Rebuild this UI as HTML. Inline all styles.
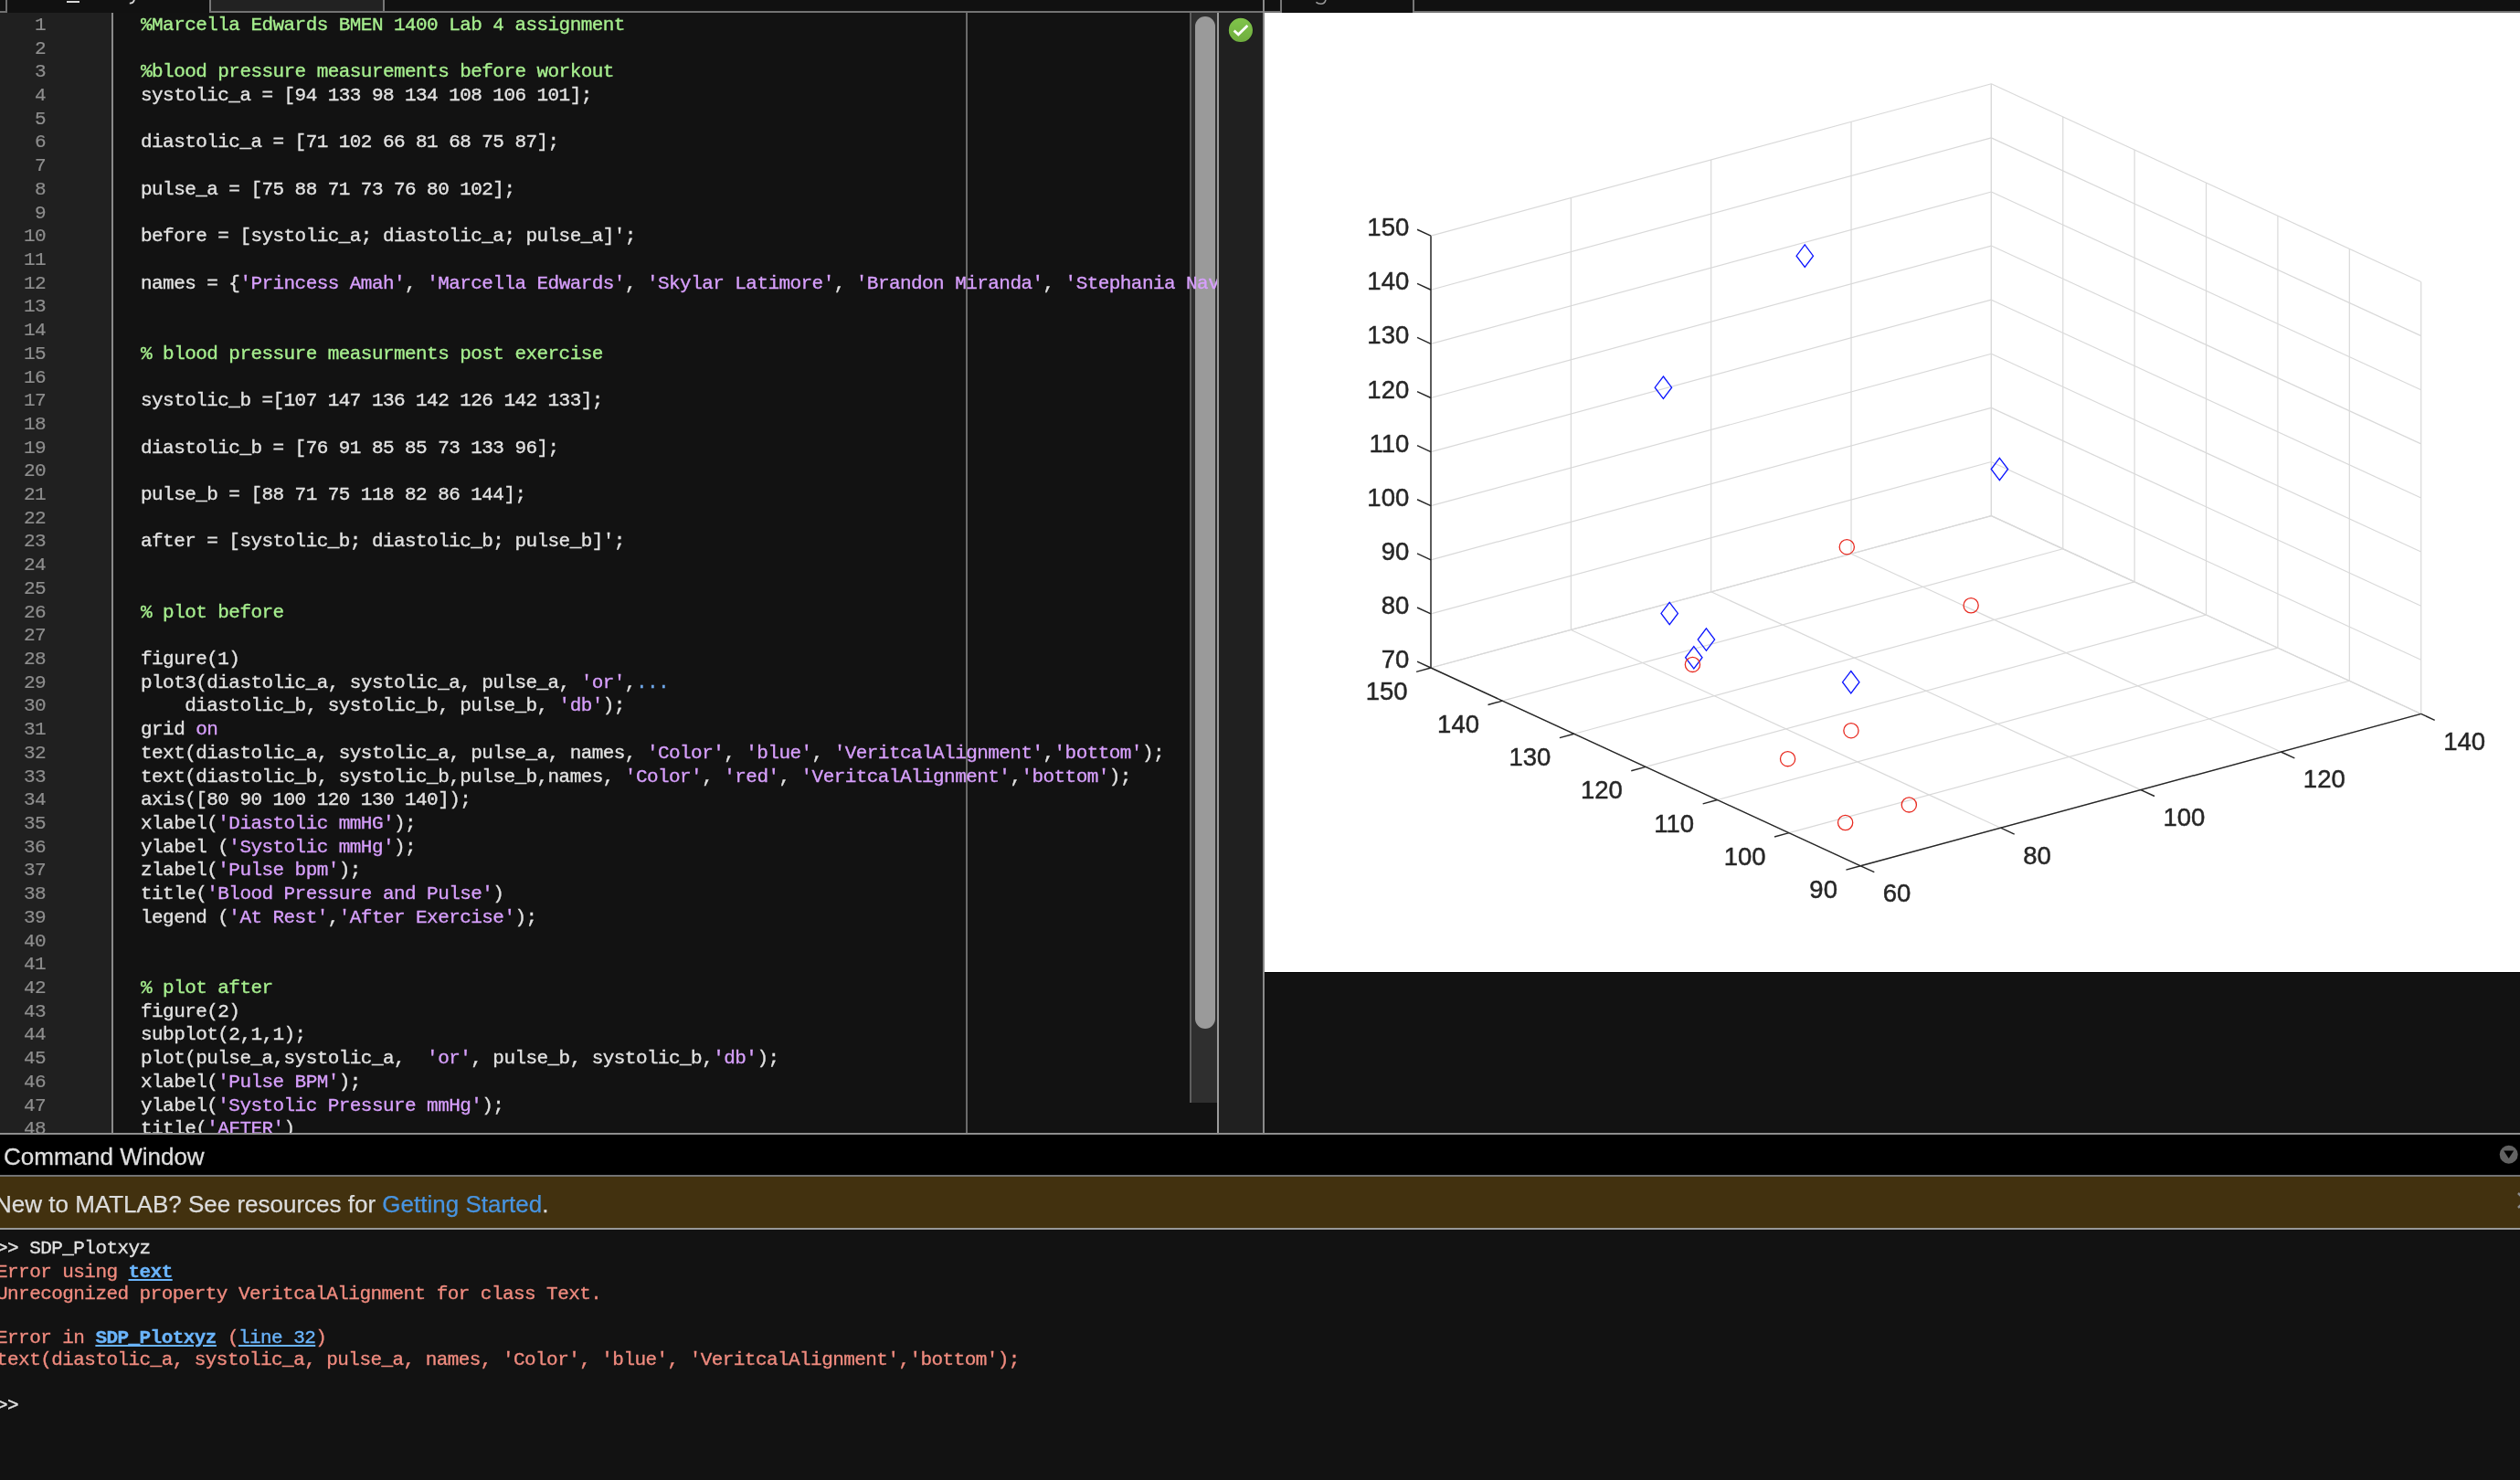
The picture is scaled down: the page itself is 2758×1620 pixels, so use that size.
<!DOCTYPE html>
<html><head><meta charset="utf-8">
<style>
html,body{margin:0;padding:0}
body{width:2758px;height:1620px;overflow:hidden;position:relative;background:#121212;font-family:"Liberation Sans",sans-serif}
.abs{position:absolute}
#topbar{left:0;top:0;width:2758px;height:14px;background:#111}
#topline{left:0;top:12px;width:2758px;height:2px;background:#6e6e6e}
.tab{position:absolute;top:0;height:12px;overflow:hidden}
#gutter{left:0;top:14px;width:122px;height:1227px;background:#202020}
#gutline{left:122px;top:14px;width:2px;height:1227px;background:#8a8a8a}
#codebg{left:124px;top:14px;width:1208px;height:1227px;background:#121212}
#code{left:124px;top:14px;width:1208px;height:1226px;overflow:hidden;will-change:transform}
#margin{left:1057px;top:14px;width:2px;height:1227px;background:#6a6a6a}
#track{left:1302px;top:14px;width:31px;height:1193px;background:#2f2f2f}
#trackl{left:1302px;top:14px;width:2px;height:1193px;background:#5e5e5e}
#thumb{left:1307.8px;top:17.9px;width:22.2px;height:1108.3px;background:#9a9a9a;border-radius:11px}
#vl2{left:1332px;top:14px;width:2px;height:1227px;background:#9c9c9c}
#rpanel{left:1334px;top:14px;width:48px;height:1227px;background:#202020}
#vl3{left:1382px;top:0;width:2px;height:1241px;background:#8a8a8a}
#fig{left:1384px;top:14px;width:1374px;height:1050px;background:#fff}
#figline{left:1384px;top:1063.5px;width:1374px;height:1.2px;background:#000}
#edbot{left:0;top:1240px;width:2758px;height:2px;background:#8e8e8e}
#cwhead{left:0;top:1242px;width:2758px;height:44px;background:#000}
#cwline{left:0;top:1286px;width:2758px;height:2px;background:#737373}
#banner{left:0;top:1288px;width:2758px;height:56px;background:#42310f}
#banline{left:0;top:1344px;width:2758px;height:2px;background:#989898}
.ln{position:absolute;will-change:transform;-webkit-text-stroke:0.2px currentColor;left:0;width:50px;text-align:right;font-family:"Liberation Mono",monospace;font-size:21px;letter-spacing:-0.56px;line-height:25.71px;color:#8e8e8e;white-space:pre}
.cl{position:absolute;left:30px;-webkit-text-stroke:0.35px currentColor;font-family:"Liberation Mono",monospace;font-size:21px;letter-spacing:-0.56px;line-height:25.71px;white-space:pre;color:#e2e2e2}
.d{color:#e2e2e2}.c{color:#a6ee8e}.s{color:#d79ffc}.k{color:#6fa8ea}
.mono{position:absolute;-webkit-text-stroke:0.35px currentColor;will-change:transform;font-family:"Liberation Mono",monospace;font-size:21px;letter-spacing:-0.56px;line-height:24px;white-space:pre}
.err{color:#f08b7f}
.lnk{color:#6ab4fb;font-weight:bold;text-decoration:underline}
.lnk2{color:#6ab4fb;text-decoration:underline}
</style></head><body>
<div id="topbar" class="abs"></div>
<div class="abs" style="left:0;top:12px;width:7.6px;height:1.8px;background:#707070"></div>
<div class="abs" style="left:5.7px;top:0;width:1.9px;height:13.6px;background:#707070;border-bottom-right-radius:1px"></div>
<div class="abs" style="left:228.7px;top:0;width:192.2px;height:12px;background:#222"></div>
<div class="abs" style="left:228.7px;top:0;width:1.9px;height:13.8px;background:#777"></div>
<div class="abs" style="left:419px;top:0;width:1.9px;height:13.8px;background:#777"></div>
<div class="abs" style="left:228.7px;top:12px;width:1153.3px;height:1.8px;background:#737373"></div>
<div class="abs" style="left:1384px;top:12px;width:19px;height:1.8px;background:#737373"></div>
<div class="abs" style="left:1401px;top:0;width:1.9px;height:13.8px;background:#777"></div>
<div class="abs" style="left:1546px;top:0;width:1.9px;height:13.8px;background:#777"></div>
<div class="abs" style="left:1546px;top:12px;width:1212px;height:1.8px;background:#737373"></div>
<div class="abs" style="left:73.3px;top:1.1px;width:13.4px;height:1.8px;background:#d8d8d8"></div>
<svg class="abs" style="left:138px;top:0" width="12" height="7" viewBox="0 0 12 7"><path d="M9 -1Q8.5 3.6 3.8 3.6" fill="none" stroke="#d8d8d8" stroke-width="1.8"/></svg>
<svg class="abs" style="left:1438px;top:0" width="16" height="7" viewBox="0 0 16 7"><path d="M13 -1Q12.5 4.2 7.6 4.2Q4.4 4.2 2.4 2.4" fill="none" stroke="#9a9a9a" stroke-width="1.6"/></svg>
<div id="gutter" class="abs"><div class="ln" style="top:0.86px">1</div>
<div class="ln" style="top:26.57px">2</div>
<div class="ln" style="top:52.28px">3</div>
<div class="ln" style="top:77.99px">4</div>
<div class="ln" style="top:103.70px">5</div>
<div class="ln" style="top:129.41px">6</div>
<div class="ln" style="top:155.12px">7</div>
<div class="ln" style="top:180.83px">8</div>
<div class="ln" style="top:206.54px">9</div>
<div class="ln" style="top:232.25px">10</div>
<div class="ln" style="top:257.96px">11</div>
<div class="ln" style="top:283.67px">12</div>
<div class="ln" style="top:309.38px">13</div>
<div class="ln" style="top:335.09px">14</div>
<div class="ln" style="top:360.80px">15</div>
<div class="ln" style="top:386.51px">16</div>
<div class="ln" style="top:412.22px">17</div>
<div class="ln" style="top:437.93px">18</div>
<div class="ln" style="top:463.64px">19</div>
<div class="ln" style="top:489.35px">20</div>
<div class="ln" style="top:515.06px">21</div>
<div class="ln" style="top:540.77px">22</div>
<div class="ln" style="top:566.48px">23</div>
<div class="ln" style="top:592.19px">24</div>
<div class="ln" style="top:617.90px">25</div>
<div class="ln" style="top:643.61px">26</div>
<div class="ln" style="top:669.32px">27</div>
<div class="ln" style="top:695.03px">28</div>
<div class="ln" style="top:720.74px">29</div>
<div class="ln" style="top:746.45px">30</div>
<div class="ln" style="top:772.16px">31</div>
<div class="ln" style="top:797.87px">32</div>
<div class="ln" style="top:823.58px">33</div>
<div class="ln" style="top:849.29px">34</div>
<div class="ln" style="top:875.00px">35</div>
<div class="ln" style="top:900.71px">36</div>
<div class="ln" style="top:926.42px">37</div>
<div class="ln" style="top:952.13px">38</div>
<div class="ln" style="top:977.84px">39</div>
<div class="ln" style="top:1003.55px">40</div>
<div class="ln" style="top:1029.26px">41</div>
<div class="ln" style="top:1054.97px">42</div>
<div class="ln" style="top:1080.68px">43</div>
<div class="ln" style="top:1106.39px">44</div>
<div class="ln" style="top:1132.10px">45</div>
<div class="ln" style="top:1157.81px">46</div>
<div class="ln" style="top:1183.52px">47</div>
<div class="ln" style="top:1209.23px">48</div></div>
<div id="gutline" class="abs"></div>
<div id="codebg" class="abs"></div>
<div id="margin" class="abs"></div>
<div id="track" class="abs"></div>
<div id="trackl" class="abs"></div>
<div id="thumb" class="abs"></div>
<div id="code" class="abs"><div class="cl" style="top:0.86px"><span class="c">%Marcella Edwards BMEN 1400 Lab 4 assignment</span></div>
<div class="cl" style="top:52.28px"><span class="c">%blood pressure measurements before workout</span></div>
<div class="cl" style="top:77.99px"><span class="d">systolic_a = [94 133 98 134 108 106 101];</span></div>
<div class="cl" style="top:129.41px"><span class="d">diastolic_a = [71 102 66 81 68 75 87];</span></div>
<div class="cl" style="top:180.83px"><span class="d">pulse_a = [75 88 71 73 76 80 102];</span></div>
<div class="cl" style="top:232.25px"><span class="d">before = [systolic_a; diastolic_a; pulse_a]&#x27;;</span></div>
<div class="cl" style="top:283.67px"><span class="d">names = {</span><span class="s">&#x27;Princess Amah&#x27;</span><span class="d">, </span><span class="s">&#x27;Marcella Edwards&#x27;</span><span class="d">, </span><span class="s">&#x27;Skylar Latimore&#x27;</span><span class="d">, </span><span class="s">&#x27;Brandon Miranda&#x27;</span><span class="d">, </span><span class="s">&#x27;Stephania Navarro&#x27;</span><span class="d">};</span></div>
<div class="cl" style="top:360.80px"><span class="c">% blood pressure measurments post exercise</span></div>
<div class="cl" style="top:412.22px"><span class="d">systolic_b =[107 147 136 142 126 142 133];</span></div>
<div class="cl" style="top:463.64px"><span class="d">diastolic_b = [76 91 85 85 73 133 96];</span></div>
<div class="cl" style="top:515.06px"><span class="d">pulse_b = [88 71 75 118 82 86 144];</span></div>
<div class="cl" style="top:566.48px"><span class="d">after = [systolic_b; diastolic_b; pulse_b]&#x27;;</span></div>
<div class="cl" style="top:643.61px"><span class="c">% plot before</span></div>
<div class="cl" style="top:695.03px"><span class="d">figure(1)</span></div>
<div class="cl" style="top:720.74px"><span class="d">plot3(diastolic_a, systolic_a, pulse_a, </span><span class="s">&#x27;or&#x27;</span><span class="d">,</span><span class="k">...</span></div>
<div class="cl" style="top:746.45px"><span class="d">    diastolic_b, systolic_b, pulse_b, </span><span class="s">&#x27;db&#x27;</span><span class="d">);</span></div>
<div class="cl" style="top:772.16px"><span class="d">grid </span><span class="s">on</span></div>
<div class="cl" style="top:797.87px"><span class="d">text(diastolic_a, systolic_a, pulse_a, names, </span><span class="s">&#x27;Color&#x27;</span><span class="d">, </span><span class="s">&#x27;blue&#x27;</span><span class="d">, </span><span class="s">&#x27;VeritcalAlignment&#x27;</span><span class="d">,</span><span class="s">&#x27;bottom&#x27;</span><span class="d">);</span></div>
<div class="cl" style="top:823.58px"><span class="d">text(diastolic_b, systolic_b,pulse_b,names, </span><span class="s">&#x27;Color&#x27;</span><span class="d">, </span><span class="s">&#x27;red&#x27;</span><span class="d">, </span><span class="s">&#x27;VeritcalAlignment&#x27;</span><span class="d">,</span><span class="s">&#x27;bottom&#x27;</span><span class="d">);</span></div>
<div class="cl" style="top:849.29px"><span class="d">axis([80 90 100 120 130 140]);</span></div>
<div class="cl" style="top:875.00px"><span class="d">xlabel(</span><span class="s">&#x27;Diastolic mmHG&#x27;</span><span class="d">);</span></div>
<div class="cl" style="top:900.71px"><span class="d">ylabel (</span><span class="s">&#x27;Systolic mmHg&#x27;</span><span class="d">);</span></div>
<div class="cl" style="top:926.42px"><span class="d">zlabel(</span><span class="s">&#x27;Pulse bpm&#x27;</span><span class="d">);</span></div>
<div class="cl" style="top:952.13px"><span class="d">title(</span><span class="s">&#x27;Blood Pressure and Pulse&#x27;</span><span class="d">)</span></div>
<div class="cl" style="top:977.84px"><span class="d">legend (</span><span class="s">&#x27;At Rest&#x27;</span><span class="d">,</span><span class="s">&#x27;After Exercise&#x27;</span><span class="d">);</span></div>
<div class="cl" style="top:1054.97px"><span class="c">% plot after</span></div>
<div class="cl" style="top:1080.68px"><span class="d">figure(2)</span></div>
<div class="cl" style="top:1106.39px"><span class="d">subplot(2,1,1);</span></div>
<div class="cl" style="top:1132.10px"><span class="d">plot(pulse_a,systolic_a,  </span><span class="s">&#x27;or&#x27;</span><span class="d">, pulse_b, systolic_b,</span><span class="s">&#x27;db&#x27;</span><span class="d">);</span></div>
<div class="cl" style="top:1157.81px"><span class="d">xlabel(</span><span class="s">&#x27;Pulse BPM&#x27;</span><span class="d">);</span></div>
<div class="cl" style="top:1183.52px"><span class="d">ylabel(</span><span class="s">&#x27;Systolic Pressure mmHg&#x27;</span><span class="d">);</span></div>
<div class="cl" style="top:1209.23px"><span class="d">title(</span><span class="s">&#x27;AFTER&#x27;</span><span class="d">)</span></div></div>
<div id="vl2" class="abs"></div>
<div id="rpanel" class="abs"></div>
<svg class="abs" style="left:1340px;top:16px" width="36" height="36" viewBox="1340 16 36 36">
<defs><linearGradient id="gg" x1="0" y1="0" x2="0" y2="1"><stop offset="0" stop-color="#80c44a"/><stop offset="1" stop-color="#70ad3f"/></linearGradient></defs>
<circle cx="1357.9" cy="32.9" r="13.6" fill="#15151c"/>
<circle cx="1357.9" cy="32.9" r="13.1" fill="url(#gg)"/>
<path d="M1350.6 33.4L1355.3 37.8L1365.3 28" fill="none" stroke="#fff" stroke-width="2.8"/>
</svg>
<div id="vl3" class="abs"></div>
<div id="fig" class="abs"></div>
<svg class="abs" style="left:1384px;top:14px;will-change:transform" width="1374" height="1050" viewBox="1384 14 1374 1050" font-family="Liberation Sans" font-size="27.5" fill="#262626"><g stroke="none">
<line x1="2036.35" y1="947.80" x2="1566.01" y2="731.02" stroke="#d9d9d9" stroke-width="1.2"/>
<line x1="2189.69" y1="906.20" x2="1719.35" y2="689.42" stroke="#d9d9d9" stroke-width="1.2"/>
<line x1="2343.03" y1="864.60" x2="1872.69" y2="647.82" stroke="#d9d9d9" stroke-width="1.2"/>
<line x1="2496.37" y1="823.00" x2="2026.03" y2="606.22" stroke="#d9d9d9" stroke-width="1.2"/>
<line x1="2649.71" y1="781.40" x2="2179.37" y2="564.62" stroke="#d9d9d9" stroke-width="1.2"/>
<line x1="2036.35" y1="947.80" x2="2649.71" y2="781.40" stroke="#d9d9d9" stroke-width="1.2"/>
<line x1="1957.96" y1="911.67" x2="2571.32" y2="745.27" stroke="#d9d9d9" stroke-width="1.2"/>
<line x1="1879.57" y1="875.54" x2="2492.93" y2="709.14" stroke="#d9d9d9" stroke-width="1.2"/>
<line x1="1801.18" y1="839.41" x2="2414.54" y2="673.01" stroke="#d9d9d9" stroke-width="1.2"/>
<line x1="1722.79" y1="803.28" x2="2336.15" y2="636.88" stroke="#d9d9d9" stroke-width="1.2"/>
<line x1="1644.40" y1="767.15" x2="2257.76" y2="600.75" stroke="#d9d9d9" stroke-width="1.2"/>
<line x1="1566.01" y1="731.02" x2="2179.37" y2="564.62" stroke="#d9d9d9" stroke-width="1.2"/>
<line x1="1566.01" y1="731.02" x2="1566.01" y2="258.14" stroke="#d9d9d9" stroke-width="1.2"/>
<line x1="1719.35" y1="689.42" x2="1719.35" y2="216.54" stroke="#d9d9d9" stroke-width="1.2"/>
<line x1="1872.69" y1="647.82" x2="1872.69" y2="174.94" stroke="#d9d9d9" stroke-width="1.2"/>
<line x1="2026.03" y1="606.22" x2="2026.03" y2="133.34" stroke="#d9d9d9" stroke-width="1.2"/>
<line x1="2179.37" y1="564.62" x2="2179.37" y2="91.74" stroke="#d9d9d9" stroke-width="1.2"/>
<line x1="1566.01" y1="731.02" x2="2179.37" y2="564.62" stroke="#d9d9d9" stroke-width="1.2"/>
<line x1="1566.01" y1="671.91" x2="2179.37" y2="505.51" stroke="#d9d9d9" stroke-width="1.2"/>
<line x1="1566.01" y1="612.80" x2="2179.37" y2="446.40" stroke="#d9d9d9" stroke-width="1.2"/>
<line x1="1566.01" y1="553.69" x2="2179.37" y2="387.29" stroke="#d9d9d9" stroke-width="1.2"/>
<line x1="1566.01" y1="494.58" x2="2179.37" y2="328.18" stroke="#d9d9d9" stroke-width="1.2"/>
<line x1="1566.01" y1="435.47" x2="2179.37" y2="269.07" stroke="#d9d9d9" stroke-width="1.2"/>
<line x1="1566.01" y1="376.36" x2="2179.37" y2="209.96" stroke="#d9d9d9" stroke-width="1.2"/>
<line x1="1566.01" y1="317.25" x2="2179.37" y2="150.85" stroke="#d9d9d9" stroke-width="1.2"/>
<line x1="1566.01" y1="258.14" x2="2179.37" y2="91.74" stroke="#d9d9d9" stroke-width="1.2"/>
<line x1="2649.71" y1="781.40" x2="2649.71" y2="308.52" stroke="#d9d9d9" stroke-width="1.2"/>
<line x1="2571.32" y1="745.27" x2="2571.32" y2="272.39" stroke="#d9d9d9" stroke-width="1.2"/>
<line x1="2492.93" y1="709.14" x2="2492.93" y2="236.26" stroke="#d9d9d9" stroke-width="1.2"/>
<line x1="2414.54" y1="673.01" x2="2414.54" y2="200.13" stroke="#d9d9d9" stroke-width="1.2"/>
<line x1="2336.15" y1="636.88" x2="2336.15" y2="164.00" stroke="#d9d9d9" stroke-width="1.2"/>
<line x1="2257.76" y1="600.75" x2="2257.76" y2="127.87" stroke="#d9d9d9" stroke-width="1.2"/>
<line x1="2179.37" y1="564.62" x2="2179.37" y2="91.74" stroke="#d9d9d9" stroke-width="1.2"/>
<line x1="2649.71" y1="781.40" x2="2179.37" y2="564.62" stroke="#d9d9d9" stroke-width="1.2"/>
<line x1="2649.71" y1="722.29" x2="2179.37" y2="505.51" stroke="#d9d9d9" stroke-width="1.2"/>
<line x1="2649.71" y1="663.18" x2="2179.37" y2="446.40" stroke="#d9d9d9" stroke-width="1.2"/>
<line x1="2649.71" y1="604.07" x2="2179.37" y2="387.29" stroke="#d9d9d9" stroke-width="1.2"/>
<line x1="2649.71" y1="544.96" x2="2179.37" y2="328.18" stroke="#d9d9d9" stroke-width="1.2"/>
<line x1="2649.71" y1="485.85" x2="2179.37" y2="269.07" stroke="#d9d9d9" stroke-width="1.2"/>
<line x1="2649.71" y1="426.74" x2="2179.37" y2="209.96" stroke="#d9d9d9" stroke-width="1.2"/>
<line x1="2649.71" y1="367.63" x2="2179.37" y2="150.85" stroke="#d9d9d9" stroke-width="1.2"/>
<line x1="2649.71" y1="308.52" x2="2179.37" y2="91.74" stroke="#d9d9d9" stroke-width="1.2"/>
<line x1="2036.35" y1="947.80" x2="2649.71" y2="781.40" stroke="#262626" stroke-width="1.45"/>
<line x1="2036.35" y1="947.80" x2="1566.01" y2="731.02" stroke="#262626" stroke-width="1.45"/>
<line x1="1566.01" y1="731.02" x2="1566.01" y2="258.14" stroke="#262626" stroke-width="1.45"/>
<line x1="2036.35" y1="947.80" x2="2051.33" y2="954.71" stroke="#262626" stroke-width="1.45"/>
<line x1="2189.69" y1="906.20" x2="2204.67" y2="913.11" stroke="#262626" stroke-width="1.45"/>
<line x1="2343.03" y1="864.60" x2="2358.01" y2="871.51" stroke="#262626" stroke-width="1.45"/>
<line x1="2496.37" y1="823.00" x2="2511.35" y2="829.91" stroke="#262626" stroke-width="1.45"/>
<line x1="2649.71" y1="781.40" x2="2664.69" y2="788.31" stroke="#262626" stroke-width="1.45"/>
<line x1="2036.35" y1="947.80" x2="2020.43" y2="952.12" stroke="#262626" stroke-width="1.45"/>
<line x1="1957.96" y1="911.67" x2="1942.04" y2="915.99" stroke="#262626" stroke-width="1.45"/>
<line x1="1879.57" y1="875.54" x2="1863.65" y2="879.86" stroke="#262626" stroke-width="1.45"/>
<line x1="1801.18" y1="839.41" x2="1785.26" y2="843.73" stroke="#262626" stroke-width="1.45"/>
<line x1="1722.79" y1="803.28" x2="1706.87" y2="807.60" stroke="#262626" stroke-width="1.45"/>
<line x1="1644.40" y1="767.15" x2="1628.48" y2="771.47" stroke="#262626" stroke-width="1.45"/>
<line x1="1566.01" y1="731.02" x2="1550.09" y2="735.34" stroke="#262626" stroke-width="1.45"/>
<line x1="1566.01" y1="731.02" x2="1551.03" y2="724.11" stroke="#262626" stroke-width="1.45"/>
<line x1="1566.01" y1="671.91" x2="1551.03" y2="665.00" stroke="#262626" stroke-width="1.45"/>
<line x1="1566.01" y1="612.80" x2="1551.03" y2="605.89" stroke="#262626" stroke-width="1.45"/>
<line x1="1566.01" y1="553.69" x2="1551.03" y2="546.78" stroke="#262626" stroke-width="1.45"/>
<line x1="1566.01" y1="494.58" x2="1551.03" y2="487.67" stroke="#262626" stroke-width="1.45"/>
<line x1="1566.01" y1="435.47" x2="1551.03" y2="428.56" stroke="#262626" stroke-width="1.45"/>
<line x1="1566.01" y1="376.36" x2="1551.03" y2="369.45" stroke="#262626" stroke-width="1.45"/>
<line x1="1566.01" y1="317.25" x2="1551.03" y2="310.34" stroke="#262626" stroke-width="1.45"/>
<line x1="1566.01" y1="258.14" x2="1551.03" y2="251.23" stroke="#262626" stroke-width="1.45"/>
<text stroke="#262626" stroke-width="0.45" transform="translate(2060.83 987.21) scale(1 1.02)" text-anchor="start">60</text>
<text stroke="#262626" stroke-width="0.45" transform="translate(2214.17 945.61) scale(1 1.02)" text-anchor="start">80</text>
<text stroke="#262626" stroke-width="0.45" transform="translate(2367.51 904.01) scale(1 1.02)" text-anchor="start">100</text>
<text stroke="#262626" stroke-width="0.45" transform="translate(2520.85 862.41) scale(1 1.02)" text-anchor="start">120</text>
<text stroke="#262626" stroke-width="0.45" transform="translate(2674.19 820.81) scale(1 1.02)" text-anchor="start">140</text>
<text stroke="#262626" stroke-width="0.45" transform="translate(2010.93 982.82) scale(1 1.02)" text-anchor="end">90</text>
<text stroke="#262626" stroke-width="0.45" transform="translate(1932.54 946.69) scale(1 1.02)" text-anchor="end">100</text>
<text stroke="#262626" stroke-width="0.45" transform="translate(1854.15 910.56) scale(1 1.02)" text-anchor="end">110</text>
<text stroke="#262626" stroke-width="0.45" transform="translate(1775.76 874.43) scale(1 1.02)" text-anchor="end">120</text>
<text stroke="#262626" stroke-width="0.45" transform="translate(1697.37 838.30) scale(1 1.02)" text-anchor="end">130</text>
<text stroke="#262626" stroke-width="0.45" transform="translate(1618.98 802.17) scale(1 1.02)" text-anchor="end">140</text>
<text stroke="#262626" stroke-width="0.45" transform="translate(1540.59 766.04) scale(1 1.02)" text-anchor="end">150</text>
<text stroke="#262626" stroke-width="0.45" transform="translate(1542.23 731.11) scale(1 1.02)" text-anchor="end">70</text>
<text stroke="#262626" stroke-width="0.45" transform="translate(1542.23 672.00) scale(1 1.02)" text-anchor="end">80</text>
<text stroke="#262626" stroke-width="0.45" transform="translate(1542.23 612.89) scale(1 1.02)" text-anchor="end">90</text>
<text stroke="#262626" stroke-width="0.45" transform="translate(1542.23 553.78) scale(1 1.02)" text-anchor="end">100</text>
<text stroke="#262626" stroke-width="0.45" transform="translate(1542.23 494.67) scale(1 1.02)" text-anchor="end">110</text>
<text stroke="#262626" stroke-width="0.45" transform="translate(1542.23 435.56) scale(1 1.02)" text-anchor="end">120</text>
<text stroke="#262626" stroke-width="0.45" transform="translate(1542.23 376.45) scale(1 1.02)" text-anchor="end">130</text>
<text stroke="#262626" stroke-width="0.45" transform="translate(1542.23 317.34) scale(1 1.02)" text-anchor="end">140</text>
<text stroke="#262626" stroke-width="0.45" transform="translate(1542.23 258.23) scale(1 1.02)" text-anchor="end">150</text>
<path d="M2025.76 734.50L2034.96 746.70L2025.76 758.90L2016.56 746.70Z" fill="none" stroke="#0a14ff" stroke-width="1.3"/>
<path d="M1827.20 659.27L1836.40 671.47L1827.20 683.67L1818.00 671.47Z" fill="none" stroke="#0a14ff" stroke-width="1.3"/>
<path d="M1867.43 687.85L1876.63 700.05L1867.43 712.25L1858.23 700.05Z" fill="none" stroke="#0a14ff" stroke-width="1.3"/>
<path d="M1820.40 412.00L1829.60 424.20L1820.40 436.40L1811.20 424.20Z" fill="none" stroke="#0a14ff" stroke-width="1.3"/>
<path d="M1853.82 707.56L1863.02 719.76L1853.82 731.96L1844.62 719.76Z" fill="none" stroke="#0a14ff" stroke-width="1.3"/>
<path d="M2188.41 501.31L2197.61 513.51L2188.41 525.71L2179.21 513.51Z" fill="none" stroke="#0a14ff" stroke-width="1.3"/>
<path d="M1975.29 267.95L1984.49 280.15L1975.29 292.35L1966.09 280.15Z" fill="none" stroke="#0a14ff" stroke-width="1.3"/>
<circle cx="2089.33" cy="880.91" r="8.1" fill="none" stroke="#e82a20" stroke-width="1.3"/>
<circle cx="2021.29" cy="598.68" r="8.1" fill="none" stroke="#e82a20" stroke-width="1.3"/>
<circle cx="2019.64" cy="900.50" r="8.1" fill="none" stroke="#e82a20" stroke-width="1.3"/>
<circle cx="1852.44" cy="727.42" r="8.1" fill="none" stroke="#e82a20" stroke-width="1.3"/>
<circle cx="1956.58" cy="830.66" r="8.1" fill="none" stroke="#e82a20" stroke-width="1.3"/>
<circle cx="2025.93" cy="799.68" r="8.1" fill="none" stroke="#e82a20" stroke-width="1.3"/>
<circle cx="2157.13" cy="662.74" r="8.1" fill="none" stroke="#e82a20" stroke-width="1.3"/>
</g></svg>
<div id="figline" class="abs"></div>
<div id="edbot" class="abs"></div>
<div id="cwhead" class="abs"></div>
<div class="abs" style="left:4px;top:1248.8px;font-size:26px;line-height:34px;color:#dedede;will-change:transform;-webkit-text-stroke:0.3px currentColor">Command Window</div>
<svg class="abs" style="left:2735px;top:1253px" width="22" height="22" viewBox="0 0 22 22"><circle cx="10.7" cy="10.8" r="10" fill="#626262"/><path d="M5.2 6.5L16.2 6.5L10.7 15Z" fill="#000"/></svg>
<div id="cwline" class="abs"></div>
<div id="banner" class="abs"></div>
<div class="abs" style="left:-5.8px;top:1301.4px;font-size:26px;line-height:34px;color:#dcdcdc;white-space:pre;will-change:transform;-webkit-text-stroke:0.25px currentColor">New to MATLAB? See resources for <span style="color:#4894e0">Getting Started</span>.</div>
<svg class="abs" style="left:2750px;top:1300px" width="8" height="28" viewBox="2750 1300 8 28"><path d="M2756 1306L2772 1322M2756 1322L2772 1306" stroke="#8a8a8a" stroke-width="2.6"/></svg>
<div id="banline" class="abs"></div>
<div class="mono" style="left:-4px;top:1355px;color:#e2e2e2">&gt;&gt; SDP_Plotxyz</div>
<div class="mono err" style="left:-4px;top:1381px">Error using <span class="lnk">text</span></div>
<div class="mono err" style="left:-4px;top:1405.3px">Unrecognized property VeritcalAlignment for class Text.</div>
<div class="mono err" style="left:-4px;top:1453.3px">Error in <span class="lnk">SDP_Plotxyz</span> (<span class="lnk2">line 32</span>)</div>
<div class="mono err" style="left:-4px;top:1477.3px">text(diastolic_a, systolic_a, pulse_a, names, 'Color', 'blue', 'VeritcalAlignment','bottom');</div>
<div class="mono" style="left:-4px;top:1527px;color:#e2e2e2">&gt;&gt;</div>
</body></html>
